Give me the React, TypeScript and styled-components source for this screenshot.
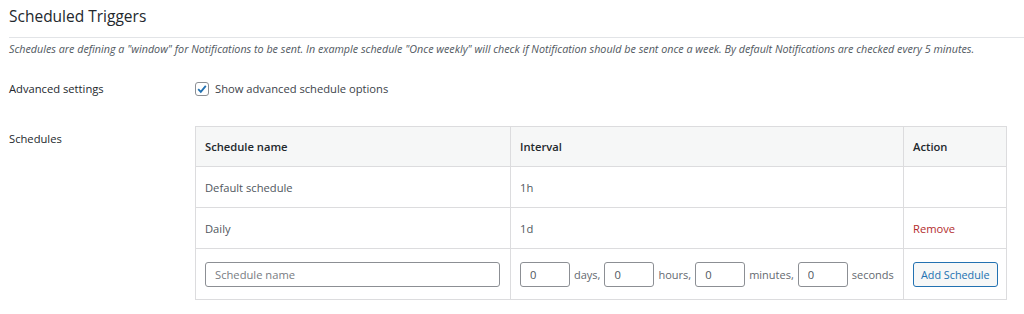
import React, { FC } from 'react';
import styled, { createGlobalStyle } from 'styled-components';

const GlobalStyle = createGlobalStyle`
  html, body {
    margin: 0;
    padding: 0;
    background: #ffffff;
  }
  body {
    font-family: "Open Sans", "Liberation Sans", sans-serif;
    font-size: 11.2px;
    color: #3c434a;
  }
`;

const Page = styled.div`
  width: 1024px;
  height: 314px;
  padding: 0 0 0 9px;
  box-sizing: border-box;
  overflow: hidden;
`;

const Title = styled.h2`
  margin: 0;
  padding-top: 5px;
  height: 38px;
  box-sizing: border-box;
  font-size: 15.5px;
  font-weight: 400;
  color: #23282d;
  border-bottom: 1px solid #e2e4e7;
`;

const Description = styled.p`
  margin: 0;
  padding-top: 4px;
  font-size: 10.75px;
  font-style: italic;
  color: #50575e;
`;

const SettingRow = styled.div<{ $top: number }>`
  display: grid;
  grid-template-columns: 186px 1fr;
  margin-top: ${(p) => p.$top}px;
  align-items: start;
`;

const SettingLabel = styled.div<{ $pad: number }>`
  padding-top: ${(p) => p.$pad}px;
  color: #23282d;
`;

const CheckLabel = styled.label`
  display: flex;
  align-items: center;
  gap: 6px;
  color: #3c434a;
`;

const Checkbox = styled.span`
  width: 14px;
  height: 14px;
  border: 1px solid #8c8f94;
  border-radius: 3px;
  display: flex;
  align-items: center;
  justify-content: center;
  box-sizing: border-box;
`;

const Table = styled.table`
  width: 811px;
  table-layout: fixed;
  border-collapse: collapse;
  border: 1px solid #dcdcde;
`;

const HeadCell = styled.th<{ $w: number }>`
  width: ${(p) => p.$w}px;
  box-sizing: border-box;
  height: 40px;
  padding: 0 9px;
  text-align: left;
  font-weight: 600;
  color: #23282d;
  background: #f6f7f7;
  border: 1px solid #dcdcde;
`;

const Cell = styled.td<{ $h?: number }>`
  height: ${(p) => p.$h ?? 40}px;
  padding: 0 9px;
  color: #50575e;
  border: 1px solid #dcdcde;
  white-space: nowrap;
`;

const RemoveLink = styled.a`
  color: #b32d2e;
  text-decoration: none;
`;

const TextInput = styled.input<{ $w: number }>`
  width: ${(p) => p.$w}px;
  height: 25px;
  box-sizing: border-box;
  padding: 0 9px;
  border: 1px solid #8c8f94;
  border-radius: 3px;
  font-family: inherit;
  font-size: 11.2px;
  color: #50575e;
  &::placeholder {
    color: #787c82;
  }
`;

const IntervalFields = styled.div`
  display: flex;
  align-items: center;
  gap: 4px;
`;

const Unit = styled.span`
  color: #646970;
  font-size: 11px;
`;

const Button = styled.button`
  height: 25px;
  padding: 0 7px;
  border: 1px solid #2271b1;
  border-radius: 3px;
  background: #f6f7f7;
  color: #2271b1;
  font-family: inherit;
  font-size: 10.8px;
`;

const units = ['days,', 'hours,', 'minutes,', 'seconds'];

const App: FC = () => {
  return (
    <Page>
      <GlobalStyle />
      <Title>Scheduled Triggers</Title>
      <Description>
        Schedules are defining a "window" for Notifications to be sent. In example schedule "Once weekly" will check if
        Notification should be sent once a week. By default Notifications are checked every 5 minutes.
      </Description>
      <SettingRow $top={25}>
        <SettingLabel $pad={0}>Advanced settings</SettingLabel>
        <CheckLabel>
          <Checkbox>
            <svg width="12" height="12" viewBox="0 0 12 12">
              <path d="M2.2 6.2 L4.8 8.8 L9.8 2.8" fill="none" stroke="#2271b1" strokeWidth="1.8" />
            </svg>
          </Checkbox>
          Show advanced schedule options
        </CheckLabel>
      </SettingRow>
      <SettingRow $top={30}>
        <SettingLabel $pad={5}>Schedules</SettingLabel>
        <Table>
          <thead>
            <tr>
              <HeadCell $w={315}>Schedule name</HeadCell>
              <HeadCell $w={393}>Interval</HeadCell>
              <HeadCell $w={103}>Action</HeadCell>
            </tr>
          </thead>
          <tbody>
            <tr>
              <Cell>Default schedule</Cell>
              <Cell>1h</Cell>
              <Cell />
            </tr>
            <tr>
              <Cell>Daily</Cell>
              <Cell>1d</Cell>
              <Cell>
                <RemoveLink href="#">Remove</RemoveLink>
              </Cell>
            </tr>
            <tr>
              <Cell $h={50}>
                <TextInput $w={295} placeholder="Schedule name" />
              </Cell>
              <Cell $h={50}>
                <IntervalFields>
                  {units.map((u) => (
                    <React.Fragment key={u}>
                      <TextInput $w={50} defaultValue="0" />
                      <Unit>{u}</Unit>
                    </React.Fragment>
                  ))}
                </IntervalFields>
              </Cell>
              <Cell $h={50}>
                <Button>Add Schedule</Button>
              </Cell>
            </tr>
          </tbody>
        </Table>
      </SettingRow>
    </Page>
  );
};

export default App;
